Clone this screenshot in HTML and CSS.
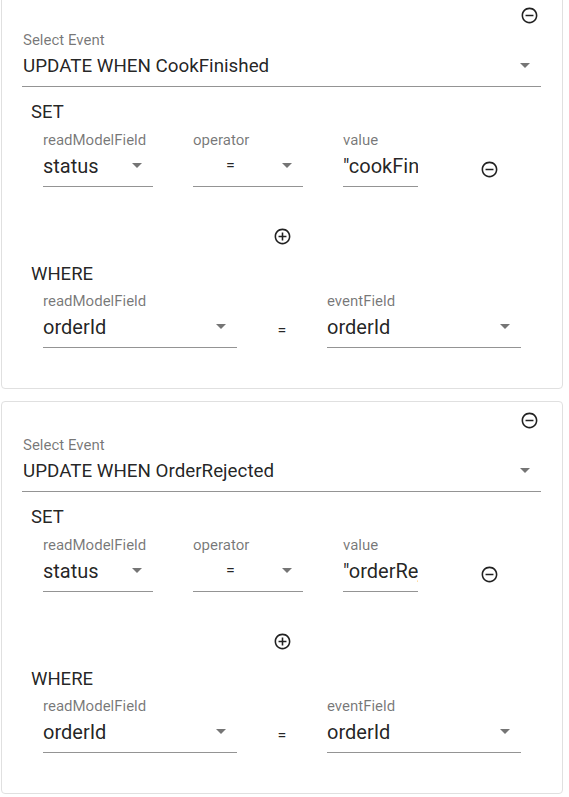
FILE: index.html
```html
<!DOCTYPE html>
<html>
<head>
<meta charset="utf-8">
<link rel="stylesheet" href="styles.css">
</head>
<body>
<div class="page">
  <div class="card">
    <div class="card-top">
      <svg class="icon" viewBox="0 0 24 24"><path d="M7 11v2h10v-2H7zm5-9C6.48 2 2 6.48 2 12s4.48 10 10 10 10-4.48 10-10S17.52 2 12 2zm0 18c-4.41 0-8-3.59-8-8s3.59-8 8-8 8 3.59 8 8-3.59 8-8 8z"/></svg>
    </div>
    <div class="field field-event">
      <span class="label">Select Event</span>
      <div class="control"><span class="value event">UPDATE WHEN CookFinished</span><svg class="arrow" viewBox="0 0 24 24"><path d="M7 10l5 5 5-5z"/></svg></div>
    </div>
    <div class="section">
      <div class="section-title">SET</div>
      <div class="set-row">
        <div class="field w110">
          <span class="label">readModelField</span>
          <div class="control"><span class="value">status</span><svg class="arrow" viewBox="0 0 24 24"><path d="M7 10l5 5 5-5z"/></svg></div>
        </div>
        <div class="field w110">
          <span class="label">operator</span>
          <div class="control"><span class="value op">=</span><svg class="arrow" viewBox="0 0 24 24"><path d="M7 10l5 5 5-5z"/></svg></div>
        </div>
        <div class="field w75">
          <span class="label">value</span>
          <div class="control"><span class="value clip">"cookFinished"</span></div>
        </div>
        <svg class="icon row-remove" viewBox="0 0 24 24"><path d="M7 11v2h10v-2H7zm5-9C6.48 2 2 6.48 2 12s4.48 10 10 10 10-4.48 10-10S17.52 2 12 2zm0 18c-4.41 0-8-3.59-8-8s3.59-8 8-8 8 3.59 8 8-3.59 8-8 8z"/></svg>
      </div>
      <div class="add-row">
        <svg class="icon" viewBox="0 0 24 24"><path d="M13 7h-2v4H7v2h4v4h2v-4h4v-2h-4V7zm-1-5C6.48 2 2 6.48 2 12s4.48 10 10 10 10-4.48 10-10S17.52 2 12 2zm0 18c-4.41 0-8-3.59-8-8s3.59-8 8-8 8 3.59 8 8-3.59 8-8 8z"/></svg>
      </div>
      <div class="section-title where">WHERE</div>
      <div class="where-row">
        <div class="field w194">
          <span class="label">readModelField</span>
          <div class="control"><span class="value">orderId</span><svg class="arrow" viewBox="0 0 24 24"><path d="M7 10l5 5 5-5z"/></svg></div>
        </div>
        <span class="eq">=</span>
        <div class="field w194">
          <span class="label">eventField</span>
          <div class="control"><span class="value">orderId</span><svg class="arrow" viewBox="0 0 24 24"><path d="M7 10l5 5 5-5z"/></svg></div>
        </div>
      </div>
    </div>
  </div>

  <div class="card">
    <div class="card-top">
      <svg class="icon" viewBox="0 0 24 24"><path d="M7 11v2h10v-2H7zm5-9C6.48 2 2 6.48 2 12s4.48 10 10 10 10-4.48 10-10S17.52 2 12 2zm0 18c-4.41 0-8-3.59-8-8s3.59-8 8-8 8 3.59 8 8-3.59 8-8 8z"/></svg>
    </div>
    <div class="field field-event">
      <span class="label">Select Event</span>
      <div class="control"><span class="value event">UPDATE WHEN OrderRejected</span><svg class="arrow" viewBox="0 0 24 24"><path d="M7 10l5 5 5-5z"/></svg></div>
    </div>
    <div class="section">
      <div class="section-title">SET</div>
      <div class="set-row">
        <div class="field w110">
          <span class="label">readModelField</span>
          <div class="control"><span class="value">status</span><svg class="arrow" viewBox="0 0 24 24"><path d="M7 10l5 5 5-5z"/></svg></div>
        </div>
        <div class="field w110">
          <span class="label">operator</span>
          <div class="control"><span class="value op">=</span><svg class="arrow" viewBox="0 0 24 24"><path d="M7 10l5 5 5-5z"/></svg></div>
        </div>
        <div class="field w75">
          <span class="label">value</span>
          <div class="control"><span class="value clip">"orderRejected"</span></div>
        </div>
        <svg class="icon row-remove" viewBox="0 0 24 24"><path d="M7 11v2h10v-2H7zm5-9C6.48 2 2 6.48 2 12s4.48 10 10 10 10-4.48 10-10S17.52 2 12 2zm0 18c-4.41 0-8-3.59-8-8s3.59-8 8-8 8 3.59 8 8-3.59 8-8 8z"/></svg>
      </div>
      <div class="add-row">
        <svg class="icon" viewBox="0 0 24 24"><path d="M13 7h-2v4H7v2h4v4h2v-4h4v-2h-4V7zm-1-5C6.48 2 2 6.48 2 12s4.48 10 10 10 10-4.48 10-10S17.52 2 12 2zm0 18c-4.41 0-8-3.59-8-8s3.59-8 8-8 8 3.59 8 8-3.59 8-8 8z"/></svg>
      </div>
      <div class="section-title where">WHERE</div>
      <div class="where-row">
        <div class="field w194">
          <span class="label">readModelField</span>
          <div class="control"><span class="value">orderId</span><svg class="arrow" viewBox="0 0 24 24"><path d="M7 10l5 5 5-5z"/></svg></div>
        </div>
        <span class="eq">=</span>
        <div class="field w194">
          <span class="label">eventField</span>
          <div class="control"><span class="value">orderId</span><svg class="arrow" viewBox="0 0 24 24"><path d="M7 10l5 5 5-5z"/></svg></div>
        </div>
      </div>
    </div>
  </div>
</div>
</body>
</html>
```

FILE: styles.css
```css
* { box-sizing: border-box; }

body {
  margin: 0;
  background: #ffffff;
  font-family: Roboto, "Liberation Sans", sans-serif;
  color: rgba(0, 0, 0, 0.87);
}

.page {
  padding: 0 6px 0 1px;
}

.card {
  width: 562px;
  border: 1px solid #e0e0e0;
  border-radius: 4px;
  padding: 0 21px 40px 20px;
}

.card:first-child { margin-top: -4px; }
.card + .card { margin-top: 12px; }

.card-top {
  display: flex;
  justify-content: flex-end;
  padding-top: 9px;
}

.icon {
  display: block;
  width: 19px;
  height: 19px;
  fill: rgba(0, 0, 0, 0.87);
}

.card-top .icon { margin-right: 2px; }

.field {
  display: flex;
  flex-direction: column;
}

.field-event { margin-top: 8px; }

.field-event .label,
.field-event .value { padding-left: 1px; }

.label {
  display: block;
  font-size: 15px;
  line-height: 15px;
  height: 15px;
  color: rgba(0, 0, 0, 0.54);
  white-space: nowrap;
}

.control {
  position: relative;
  margin-top: 6px;
  height: 33px;
  padding-bottom: 8px;
  border-bottom: 1px solid rgba(0, 0, 0, 0.42);
  font-size: 20px;
  line-height: 24px;
  overflow: hidden;
}

.value {
  display: block;
  white-space: nowrap;
}

.value.event { font-size: 18.8px; }

.value.op {
  font-size: 16px;
  padding-left: 33px;
}

.value.clip { overflow: hidden; }

.arrow {
  position: absolute;
  right: 4px;
  top: -1px;
  width: 24px;
  height: 24px;
  fill: rgba(0, 0, 0, 0.54);
}

.section {
  padding: 0 20px 0 21px;
}

.section-title {
  margin-top: 13px;
  margin-left: -21px;
  padding-left: 9px;
  font-size: 18.5px;
  line-height: 24px;
  color: rgba(0, 0, 0, 0.87);
}

.section-title.where { margin-top: 16px; }

.set-row {
  display: flex;
  align-items: flex-start;
  gap: 40px;
  margin-top: 9px;
}

.w110 { width: 110px; }
.w75 { width: 75px; }
.w194 { width: 194px; }

.row-remove {
  margin-left: 22px;
  margin-top: 27px;
}

.add-row {
  display: flex;
  justify-content: center;
  margin-top: 40px;
}

.where-row {
  display: flex;
  align-items: flex-end;
  justify-content: space-between;
  margin-top: 8px;
}

.eq {
  font-size: 16px;
  line-height: 16px;
  margin-bottom: 9px;
}
```
